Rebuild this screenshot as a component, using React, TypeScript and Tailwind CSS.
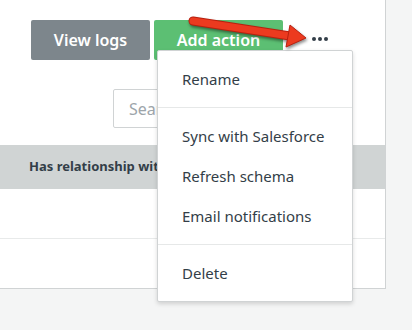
import React from "react";

const GROUPS = [["Rename"], ["Sync with Salesforce", "Refresh schema", "Email notifications"], ["Delete"]];

function ActionsMenu() {
  return (
    <div className="absolute left-[157px] top-[50px] w-[196px] rounded-[2px] border border-[#d0d3d4] bg-white shadow-[0_2px_4px_rgba(0,0,0,0.15)]">
      {GROUPS.map((g, i) => (
        <div key={i} className={i > 0 ? "border-t border-[#e6e8e8] py-2" : "py-2"}>
          {g.map((label) => (
            <div key={label} className="flex h-[40px] items-center pl-[24px] text-[15px] text-[#333e48]">
              {label}
            </div>
          ))}
        </div>
      ))}
    </div>
  );
}

function Arrow() {
  return (
    <svg
      className="pointer-events-none absolute left-0 top-0 drop-shadow-[1px_2px_1.5px_rgba(0,0,0,0.45)]"
      width="412"
      height="80"
      viewBox="0 0 412 80"
    >
      <line x1="193" y1="21" x2="290" y2="36" stroke="#b8200f" strokeWidth="9" strokeLinecap="round" />
      <line x1="193" y1="21" x2="290" y2="36" stroke="#ec3a1f" strokeWidth="7" strokeLinecap="round" />
      <polygon points="290,25 306,38 286,47" fill="#ec3a1f" stroke="#b8200f" strokeWidth="1" strokeLinejoin="round" />
    </svg>
  );
}

export default function App() {
  return (
    <div className="relative h-[330px] w-[412px] overflow-hidden bg-[#f4f5f5] font-['Noto_Sans',sans-serif]">
      <div className="h-[289px] w-[386px] border-b border-r border-[#d0d3d4] bg-white">
        <div className="flex items-center pl-[31px] pt-[20px]">
          <button className="h-[40px] w-[119px] rounded-[2px] bg-[#7d868c] text-[16px] font-semibold text-white">
            View logs
          </button>
          <button className="ml-[4px] h-[40px] w-[129px] rounded-[2px] bg-[#5cbf73] text-[16px] font-semibold text-white">
            Add action
          </button>
          <div className="ml-[29px] mt-[-2px] flex gap-[2px]">
            <span className="h-[4px] w-[4px] rounded-full bg-[#333e48]" />
            <span className="h-[4px] w-[4px] rounded-full bg-[#333e48]" />
            <span className="h-[4px] w-[4px] rounded-full bg-[#333e48]" />
          </div>
        </div>
        <div className="ml-[113px] mt-[29px] flex h-[39px] w-[230px] items-center rounded-[2px] border border-[#d0d3d4] pl-[15px] text-[16px] text-[#9da5aa]">
          Search
        </div>
        <div className="mt-[17px] flex h-[44px] items-center bg-[#d0d4d4] pl-[29px] text-[13px] font-bold text-[#333e48]">
          Has relationship with
        </div>
        <div className="h-[50px] border-b border-[#e8eaea]" />
      </div>
      <ActionsMenu />
      <Arrow />
    </div>
  );
}
